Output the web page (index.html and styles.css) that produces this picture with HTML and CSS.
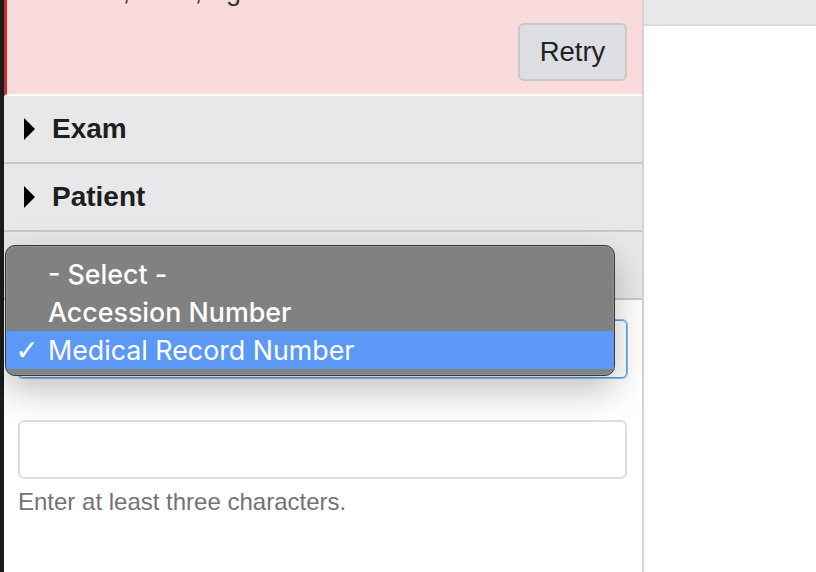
FILE: index.html
```html
<!DOCTYPE html>
<html>
<head>
<meta charset="utf-8">
<link rel="stylesheet" href="styles.css">
</head>
<body>
<div class="app">
  <div class="panel">
    <div class="alert">
      <ul class="alert-list"><li>Sex, Date, Age</li></ul>
      <div class="alert-actions"><button class="btn">Retry</button></div>
    </div>
    <div class="row"><span class="caret"></span><span class="row-title">Exam</span></div>
    <div class="row"><span class="caret"></span><span class="row-title">Patient</span></div>
    <div class="row"></div>
    <div class="content">
      <div class="select-box"></div>
      <div class="text-input"></div>
      <div class="help">Enter at least three characters.</div>
    </div>
    <div class="menu">
      <div class="menu-item strong"><span class="check"></span>- Select -</div>
      <div class="menu-item strong"><span class="check"></span>Accession Number</div>
      <div class="menu-item selected"><span class="check">✓</span>Medical Record Number</div>
    </div>
  </div>
  <div class="side">
    <div class="side-bar"></div>
  </div>
</div>
</body>
</html>
```
FILE: styles.css
```css
html, body {
  margin: 0;
  height: 100%;
}
body {
  background: #1c1c1d;
  padding-left: 4px;
  box-sizing: border-box;
  overflow: hidden;
  font-family: "Liberation Sans", Arial, sans-serif;
}
.app {
  display: flex;
  height: 572px;
  background: #fff;
}
.panel {
  position: relative;
  width: 638px;
  flex: none;
  border-right: 2px solid #d3d3d5;
  background: #fff;
}
.alert {
  background: #f9dbdc;
  border-left: 3px solid #c9302c;
  border-bottom: 2px solid #fff;
  padding: 0 15px 13px 15px;
}
.alert-list {
  margin: -28px 0 0 0;
  padding-left: 54px;
  list-style: none;
  font-size: 27px;
  line-height: 38px;
  color: #333;
}
.alert-actions {
  display: flex;
  justify-content: flex-end;
  margin-top: 13px;
}
.btn {
  width: 109px;
  height: 58px;
  background: #dddee1;
  border: 2px solid #c8c9cb;
  border-radius: 6px;
  font-family: "Liberation Sans", Arial, sans-serif;
  font-size: 27.5px;
  color: #222;
  padding: 0;
}
.row {
  height: 66px;
  background: #e8e8ea;
  border-bottom: 2px solid #c9c9cb;
  display: flex;
  align-items: center;
  padding-left: 20px;
}
.caret {
  width: 0;
  height: 0;
  border-left: 11px solid #000;
  border-top: 11px solid transparent;
  border-bottom: 11px solid transparent;
  margin-right: 17px;
}
.row-title {
  font-weight: bold;
  font-size: 28px;
  color: #1e1e1e;
}
.content {
  padding: 20px 15px 0 14px;
}
.select-box {
  height: 56px;
  border: 1px solid #5ea6dc;
  box-shadow: 0 0 0 1px #8cc0e8;
  border-radius: 5px;
}
.text-input {
  margin-top: 42px;
  height: 55px;
  border: 2px solid #dedede;
  border-radius: 6px;
}
.help {
  margin-top: 8px;
  font-size: 24px;
  line-height: 30px;
  color: #737373;
}
.menu {
  position: absolute;
  left: 1px;
  top: 245px;
  width: 610px;
  height: 131px;
  padding-top: 9px;
  box-sizing: border-box;
  background: #808181;
  border: 1px solid #3a3a3a;
  border-radius: 10px;
  box-shadow: inset 0 0 0 1px rgba(255,255,255,0.12), 0 14px 36px rgba(0,0,0,0.25);
  overflow: hidden;
  font-family: Inter, "Open Sans", sans-serif;
}
.menu-item {
  height: 38px;
  display: flex;
  align-items: center;
  color: #fff;
  font-size: 26.8px;
}
.menu-item.strong {
  font-weight: 500;
}
.menu-item.selected {
  background: #5c99f6;
  font-weight: 400;
}
.check {
  width: 42px;
  flex: none;
  text-align: center;
  font-size: 28px;
  font-family: "DejaVu Sans", sans-serif;
}
.side {
  flex: 1;
  background: #fff;
}
.side-bar {
  height: 24px;
  background: #e8e8ea;
  border-bottom: 2px solid #dcdcde;
}
```
